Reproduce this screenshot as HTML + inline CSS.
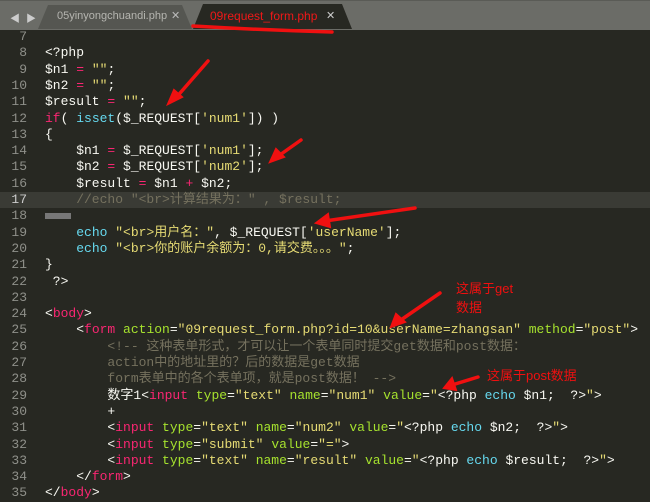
<!DOCTYPE html>
<html><head><meta charset="utf-8"><style>
*{margin:0;padding:0}
body{width:650px;height:499px;background:#272822;position:relative;overflow:hidden;font-family:"Liberation Mono","Noto Sans CJK SC",monospace;font-size:13px}
.bar{position:absolute;left:0;top:0;width:650px;height:29px;background:#6b6c67;border-top:1px solid #5a5b56}
.tab{position:absolute;top:4px;height:25px;font-family:"Liberation Sans","Noto Sans CJK SC",sans-serif;line-height:24px;white-space:nowrap}
.ln{position:absolute;left:0;width:27px;text-align:right;color:#8f908a;line-height:16.3px;height:16.3px}
.cd{position:absolute;left:45px;white-space:pre;color:#f8f8f2;line-height:16.3px;height:16.3px}
.p{color:#f92672}.g{color:#a6e22e}.y{color:#e6db74}.c{color:#66d9ef}.m{color:#75715e}
.red{position:absolute;color:#f01010;font-family:"Liberation Sans","Noto Sans CJK SC",sans-serif;font-size:13px}
</style></head><body>
<div class="bar"></div>
<div style="position:absolute;left:10px;top:10px;color:#ccc;font-size:10px">◀ ▶</div>
<svg style="position:absolute;left:0;top:0" width="650" height="30">
<path d="M38 29 L48 5 L182 5 L192 29Z" fill="#555651"/>
<path d="M193 29 L203 4 L342 4 L352 29Z" fill="#272822"/>
</svg>
<div class="tab" style="left:57px;color:#b5b5b0;font-size:11px">05yinyongchuandi.php</div>
<div class="tab" style="left:171px;color:#bbb;font-size:11px">✕</div>
<div class="tab" style="left:210px;color:#f01818;font-size:12px">09request_form.php</div>
<div class="tab" style="left:326px;color:#ccc;font-size:11px">✕</div>

<div style="position:absolute;left:0;top:192px;width:650px;height:16px;background:#3a3b35"></div>
<div style="position:absolute;left:45px;top:213px;width:26px;height:6px;background:#777"></div>

<div class="ln" style="top:29px">7</div>
<div class="ln" style="top:45.3px">8</div><div class="cd" style="top:45.3px">&lt;?php</div>
<div class="ln" style="top:61.6px">9</div><div class="cd" style="top:61.6px">$n1 <span class="p">=</span> <span class="y">""</span>;</div>
<div class="ln" style="top:77.9px">10</div><div class="cd" style="top:77.9px">$n2 <span class="p">=</span> <span class="y">""</span>;</div>
<div class="ln" style="top:94.2px">11</div><div class="cd" style="top:94.2px">$result <span class="p">=</span> <span class="y">""</span>;</div>
<div class="ln" style="top:110.5px">12</div><div class="cd" style="top:110.5px"><span class="p">if</span>( <span class="c">isset</span>($_REQUEST[<span class="y">'num1'</span>]) )</div>
<div class="ln" style="top:126.8px">13</div><div class="cd" style="top:126.8px">{</div>
<div class="ln" style="top:143.1px">14</div><div class="cd" style="top:143.1px">    $n1 <span class="p">=</span> $_REQUEST[<span class="y">'num1'</span>];</div>
<div class="ln" style="top:159.4px">15</div><div class="cd" style="top:159.4px">    $n2 <span class="p">=</span> $_REQUEST[<span class="y">'num2'</span>];</div>
<div class="ln" style="top:175.7px">16</div><div class="cd" style="top:175.7px">    $result <span class="p">=</span> $n1 <span class="p">+</span> $n2;</div>
<div class="ln" style="top:192px;color:#ccc">17</div><div class="cd m" style="top:192px">    //echo "&lt;br&gt;计算结果为：" , $result;</div>
<div class="ln" style="top:208.3px">18</div>
<div class="ln" style="top:224.6px">19</div><div class="cd" style="top:224.6px">    <span class="c">echo</span> <span class="y">"&lt;br&gt;用户名："</span>, $_REQUEST[<span class="y">'userName'</span>];</div>
<div class="ln" style="top:240.9px">20</div><div class="cd" style="top:240.9px">    <span class="c">echo</span> <span class="y">"&lt;br&gt;你的账户余额为：0,请交费。。。"</span>;</div>
<div class="ln" style="top:257.2px">21</div><div class="cd" style="top:257.2px">}</div>
<div class="ln" style="top:273.5px">22</div><div class="cd" style="top:273.5px"> ?&gt;</div>
<div class="ln" style="top:289.8px">23</div>
<div class="ln" style="top:306.1px">24</div><div class="cd" style="top:306.1px">&lt;<span class="p">body</span>&gt;</div>
<div class="ln" style="top:322.4px">25</div><div class="cd" style="top:322.4px">    &lt;<span class="p">form</span> <span class="g">action</span>=<span class="y">"09request_form.php?id=10&amp;userName=zhangsan"</span> <span class="g">method</span>=<span class="y">"post"</span>&gt;</div>
<div class="ln" style="top:338.7px">26</div><div class="cd m" style="top:338.7px">        &lt;!-- 这种表单形式，才可以让一个表单同时提交get数据和post数据：</div>
<div class="ln" style="top:355px">27</div><div class="cd m" style="top:355px">        action中的地址里的？后的数据是get数据</div>
<div class="ln" style="top:371.3px">28</div><div class="cd m" style="top:371.3px">        form表单中的各个表单项，就是post数据！ --&gt;</div>
<div class="ln" style="top:387.6px">29</div><div class="cd" style="top:387.6px">        数字1&lt;<span class="p">input</span> <span class="g">type</span>=<span class="y">"text"</span> <span class="g">name</span>=<span class="y">"num1"</span> <span class="g">value</span>=<span class="y">"</span>&lt;?php <span class="c">echo</span> $n1;  ?&gt;<span class="y">"</span>&gt;</div>
<div class="ln" style="top:403.9px">30</div><div class="cd" style="top:403.9px">        +</div>
<div class="ln" style="top:420.2px">31</div><div class="cd" style="top:420.2px">        &lt;<span class="p">input</span> <span class="g">type</span>=<span class="y">"text"</span> <span class="g">name</span>=<span class="y">"num2"</span> <span class="g">value</span>=<span class="y">"</span>&lt;?php <span class="c">echo</span> $n2;  ?&gt;<span class="y">"</span>&gt;</div>
<div class="ln" style="top:436.5px">32</div><div class="cd" style="top:436.5px">        &lt;<span class="p">input</span> <span class="g">type</span>=<span class="y">"submit"</span> <span class="g">value</span>=<span class="y">"="</span>&gt;</div>
<div class="ln" style="top:452.8px">33</div><div class="cd" style="top:452.8px">        &lt;<span class="p">input</span> <span class="g">type</span>=<span class="y">"text"</span> <span class="g">name</span>=<span class="y">"result"</span> <span class="g">value</span>=<span class="y">"</span>&lt;?php <span class="c">echo</span> $result;  ?&gt;<span class="y">"</span>&gt;</div>
<div class="ln" style="top:469.1px">34</div><div class="cd" style="top:469.1px">    &lt;/<span class="p">form</span>&gt;</div>
<div class="ln" style="top:485.4px">35</div><div class="cd" style="top:485.4px">&lt;/<span class="p">body</span>&gt;</div>

<div class="red" style="left:456px;top:278px">这属于get</div>
<div class="red" style="left:456px;top:297px">数据</div>
<div class="red" style="left:487px;top:365px">这属于post数据</div>

<svg style="position:absolute;left:0;top:0" width="650" height="499" fill="none" stroke="#f01010" stroke-linecap="round">
<path d="M193 26 Q260 30 332 32" stroke-width="3.5"/>
<path d="M208 61 L174 100" stroke-width="3.5"/><path d="M168 104 L174 90 L182 97Z" fill="#f01010" stroke-width="2"/>
<path d="M301 140 L277 157" stroke-width="3.5"/><path d="M270 162 L276 149 L284 157Z" fill="#f01010" stroke-width="2"/>
<path d="M415 208 L325 221" stroke-width="3.5"/><path d="M316 223 L328 214 L330 227Z" fill="#f01010" stroke-width="2"/>
<path d="M440 293 L398 322" stroke-width="3.5"/><path d="M391 327 L396 314 L405 322Z" fill="#f01010" stroke-width="2"/>
<path d="M478 377 L452 385" stroke-width="3.5"/><path d="M444 388 L452 378 L456 390Z" fill="#f01010" stroke-width="2"/>
</svg>
</body></html>
